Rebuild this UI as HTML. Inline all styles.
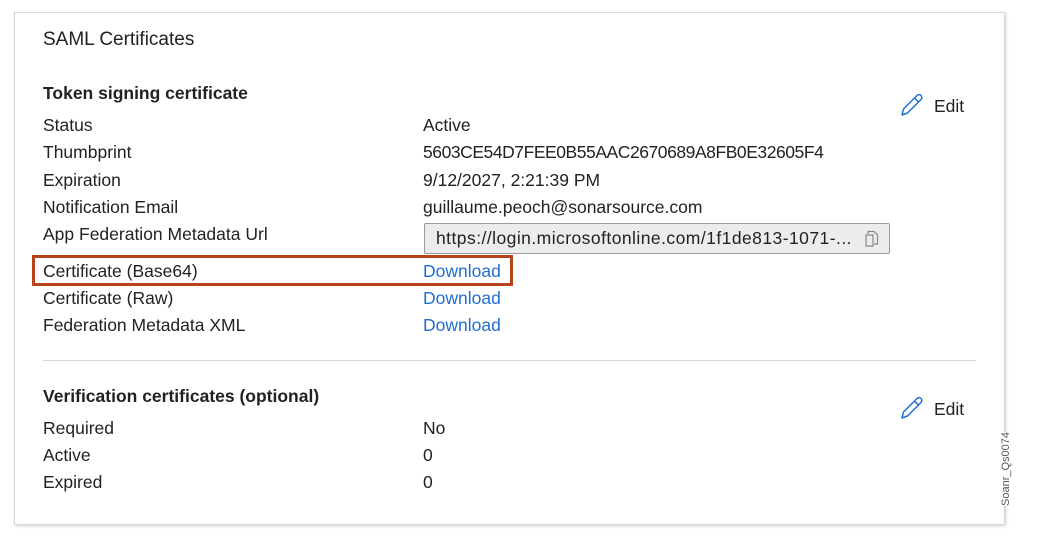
<!DOCTYPE html><html><head><style>
body{margin:0;width:1044px;height:536px;background:#fff;font-family:"Liberation Sans",sans-serif;color:#222;position:relative;overflow:hidden}
.panel{position:absolute;left:14px;top:12px;width:989px;height:511px;border:1px solid #d6d6d6;box-shadow:1px 1px 3px rgba(0,0,0,.18);background:#fff}
.t{position:absolute;font-size:17.5px;line-height:20px;white-space:nowrap}
.b{font-weight:bold}
.a{color:#1f6fd0}
.box{position:absolute;left:424px;top:223px;width:464px;height:29px;border:1px solid #9a9a9a;border-radius:2px;background:#ececec}
.red{position:absolute;left:32px;top:255px;width:481px;height:31px;border:3px solid #b9431b;box-sizing:border-box}
.hr{position:absolute;left:43px;top:360px;width:933px;height:1px;background:#d6d6d6}
.wm{position:absolute;left:1000px;top:506px;font-size:11px;color:#555;transform:rotate(-90deg);transform-origin:0 0;background:#fff}
</style></head><body>
<div class="panel"></div>
<div class="t" style="left:43px;top:30px;font-size:19px">SAML Certificates</div>
<div class="t b" style="left:43px;top:83px">Token signing certificate</div>
<div class="t" style="left:43px;top:115px">Status</div><div class="t" style="left:423px;top:115px">Active</div>
<div class="t" style="left:43px;top:142px">Thumbprint</div><div class="t" style="left:423px;top:142px;letter-spacing:-0.45px">5603CE54D7FEE0B55AAC2670689A8FB0E32605F4</div>
<div class="t" style="left:43px;top:170px">Expiration</div><div class="t" style="left:423px;top:170px">9/12/2027, 2:21:39 PM</div>
<div class="t" style="left:43px;top:197px">Notification Email</div><div class="t" style="left:423px;top:197px">guillaume.peoch@sonarsource.com</div>
<div class="t" style="left:43px;top:224px">App Federation Metadata Url</div>
<div class="box"></div>
<div class="t" style="left:436px;top:228px;letter-spacing:0.45px">https://login.microsoftonline.com/1f1de813-1071-...</div>
<svg style="position:absolute;left:864px;top:230px" width="16" height="18" viewBox="0 0 16 18"><path d="M4 4V1.5h6l3.5 3.5V14H10" fill="none" stroke="#888" stroke-width="1.2"/><path d="M2 5h7v11H2z" fill="none" stroke="#888" stroke-width="1.2"/></svg>
<div class="red"></div>
<div class="t" style="left:43px;top:261px">Certificate (Base64)</div><div class="t a" style="left:423px;top:261px">Download</div>
<div class="t" style="left:43px;top:288px">Certificate (Raw)</div><div class="t a" style="left:423px;top:288px">Download</div>
<div class="t" style="left:43px;top:315px">Federation Metadata XML</div><div class="t a" style="left:423px;top:315px">Download</div>
<div class="hr"></div>
<div class="t b" style="left:43px;top:386px">Verification certificates (optional)</div>
<div class="t" style="left:43px;top:418px">Required</div><div class="t" style="left:423px;top:418px">No</div>
<div class="t" style="left:43px;top:445px">Active</div><div class="t" style="left:423px;top:445px">0</div>
<div class="t" style="left:43px;top:472px">Expired</div><div class="t" style="left:423px;top:472px">0</div>
<svg style="position:absolute;left:900px;top:93px" width="24" height="24" viewBox="0 0 24 24"><path d="M2 22l1.5-6L17 2.5a2.5 2.5 0 0 1 4 4L7.5 20z M14.5 5l4 4" fill="none" stroke="#1f6fd0" stroke-width="1.5" stroke-linejoin="round"/></svg>
<div class="t" style="left:934px;top:96px">Edit</div>
<svg style="position:absolute;left:900px;top:396px" width="24" height="24" viewBox="0 0 24 24"><path d="M2 22l1.5-6L17 2.5a2.5 2.5 0 0 1 4 4L7.5 20z M14.5 5l4 4" fill="none" stroke="#1f6fd0" stroke-width="1.5" stroke-linejoin="round"/></svg>
<div class="t" style="left:934px;top:399px">Edit</div>
<div class="wm">Soanr_Qs0074</div>
</body></html>
